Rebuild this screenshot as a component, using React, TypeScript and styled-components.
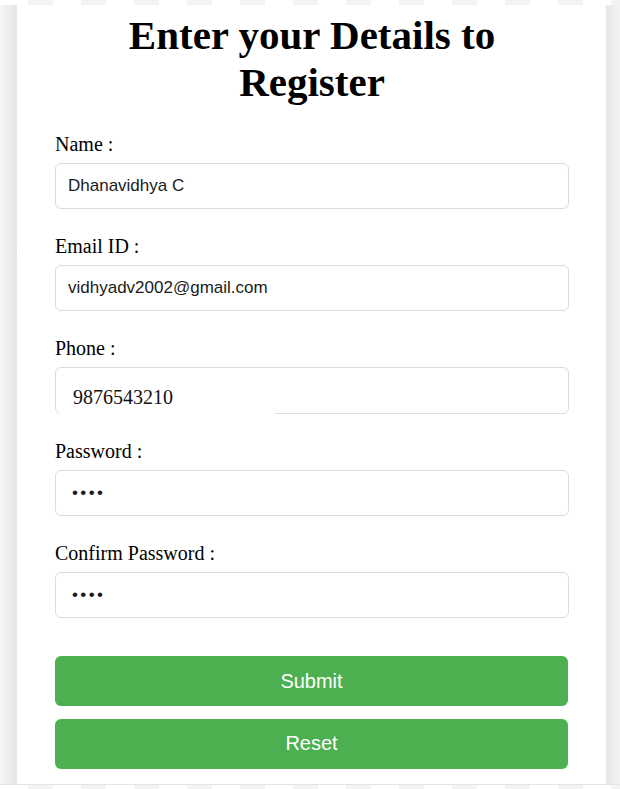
import React, { useState } from "react";
import styled, { createGlobalStyle } from "styled-components";

const GlobalStyle = createGlobalStyle`
  html, body {
    margin: 0;
    padding: 0;
    background: #ffffff;
  }
  body {
    font-family: "Liberation Serif", "Times New Roman", serif;
    overflow: hidden;
  }
  * { box-sizing: border-box; }
`;

const Page = styled.div`
  width: 620px;
  height: 789px;
  display: flex;
  flex-direction: column;
  overflow: hidden;
`;

const DashStrip = styled.div<{ $bottom?: boolean }>`
  height: 5px;
  flex: none;
  background: repeating-linear-gradient(
    90deg,
    transparent 0 28px,
    #f3f3f3 28px 53px
  );
  border-top: ${(p) => (p.$bottom ? "1px solid #e4e4e4" : "none")};
`;

const Stage = styled.div`
  flex: 1;
  display: flex;
  padding: 0 14px 0 17px;
  background: linear-gradient(
    90deg,
    #f6f6f6 0px,
    #e6e6e6 17px,
    #ffffff 17px,
    #ffffff 606px,
    #e6e6e6 606px,
    #f4f4f4 620px
  );
`;

const Card = styled.form`
  flex: 1;
  background: #ffffff;
  padding: 7px 37px 0 38px;
  display: flex;
  flex-direction: column;
`;

const Title = styled.h1`
  margin: 0 0 26.5px;
  padding: 0 55px;
  font-family: "Liberation Serif", "Times New Roman", serif;
  font-weight: 700;
  font-size: 41px;
  line-height: 47px;
  text-align: center;
  color: #000;
`;

const Field = styled.div`
  display: flex;
  flex-direction: column;
  margin-bottom: 25.85px;
`;

const Label = styled.label`
  font-family: "Liberation Serif", "Times New Roman", serif;
  font-size: 20px;
  line-height: 23px;
  color: #000;
  margin-bottom: 7px;
`;

const InputWrap = styled.div`
  position: relative;
`;

const Input = styled.input<{ $secret?: boolean }>`
  width: 100%;
  height: 46.5px;
  border: 1px solid #dcdcdc;
  border-radius: 6px;
  padding: 0 12px 0 ${(p) => (p.$secret ? "16px" : "12px")};
  font-family: "Liberation Sans", Arial, sans-serif;
  font-size: 17px;
  letter-spacing: ${(p) => (p.$secret ? "2.4px" : "normal")};
  color: #1b1b1b;
  background: #fff;
  outline: none;
  display: block;
`;

const PhoneOverlay = styled.div`
  position: absolute;
  left: 4px;
  bottom: -1px;
  width: 216px;
  height: 40px;
  background: #fff;
  padding: 4px 0 0 14px;
  font-family: "Liberation Serif", "Times New Roman", serif;
  font-size: 20px;
  line-height: 36px;
  color: #111;
`;

const Actions = styled.div`
  display: flex;
  flex-direction: column;
  gap: 12.5px;
  margin-top: 11.8px;
  padding-right: 1px;
`;

const Button = styled.button`
  height: 50px;
  width: 100%;
  border: none;
  border-radius: 6px;
  background: #4caf50;
  color: #ffffff;
  font-family: "Liberation Sans", Arial, sans-serif;
  font-size: 20px;
  cursor: pointer;
`;

export default function App() {
  const [name, setName] = useState("Dhanavidhya C");
  const [email, setEmail] = useState("vidhyadv2002@gmail.com");
  const [pwd, setPwd] = useState("abcd");
  const [cpwd, setCpwd] = useState("abcd");

  return (
    <>
      <GlobalStyle />
      <Page>
        <DashStrip />
        <Stage>
          <Card onSubmit={(e) => e.preventDefault()}>
            <Title>Enter your Details to Register</Title>
            <Field>
              <Label htmlFor="name">Name :</Label>
              <Input id="name" value={name} onChange={(e) => setName(e.target.value)} />
            </Field>
            <Field>
              <Label htmlFor="email">Email ID :</Label>
              <Input id="email" value={email} onChange={(e) => setEmail(e.target.value)} />
            </Field>
            <Field>
              <Label htmlFor="phone">Phone :</Label>
              <InputWrap>
                <Input id="phone" readOnly value="" />
                <PhoneOverlay>9876543210</PhoneOverlay>
              </InputWrap>
            </Field>
            <Field>
              <Label htmlFor="pwd">Password :</Label>
              <Input
                id="pwd"
                type="password"
                $secret
                value={pwd}
                onChange={(e) => setPwd(e.target.value)}
              />
            </Field>
            <Field>
              <Label htmlFor="cpwd">Confirm Password :</Label>
              <Input
                id="cpwd"
                type="password"
                $secret
                value={cpwd}
                onChange={(e) => setCpwd(e.target.value)}
              />
            </Field>
            <Actions>
              <Button type="submit">Submit</Button>
              <Button type="reset">Reset</Button>
            </Actions>
          </Card>
        </Stage>
        <DashStrip $bottom />
      </Page>
    </>
  );
}
